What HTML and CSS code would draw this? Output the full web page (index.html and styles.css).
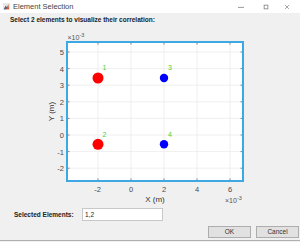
FILE: index.html
```html
<!DOCTYPE html>
<html>
<head>
<meta charset="utf-8">
<link rel="stylesheet" href="styles.css">
</head>
<body>
<div class="window">
  <div class="titlebar">
    <svg class="appicon" width="8" height="8" viewBox="0 0 8 8">
      <rect x="0" y="0" width="8" height="8" fill="#e8e8e8"/>
      <path d="M1 7 L3 3 L4.5 5 L6 1 L7 7 Z" fill="#d9531e"/>
      <path d="M3 3 L4.5 5 L3.5 7 L1 7 Z" fill="#2b6fb5"/>
    </svg>
    <span class="title">Element Selection</span>
    <span class="spacer"></span>
    <span class="ctrl">
      <svg width="8" height="8" viewBox="0 0 8 8"><line x1="0" y1="4.5" x2="8" y2="4.5" stroke="#777" stroke-width="1"/></svg>
    </span>
    <span class="ctrl">
      <svg width="8" height="8" viewBox="0 0 8 8"><rect x="1.5" y="1.5" width="5" height="5" fill="none" stroke="#777" stroke-width="1"/></svg>
    </span>
    <span class="ctrl">
      <svg width="8" height="8" viewBox="0 0 8 8"><path d="M1.5 1.5 L6.5 6.5 M6.5 1.5 L1.5 6.5" stroke="#777" stroke-width="0.9"/></svg>
    </span>
  </div>
  <div class="content">
    <div class="prompt">Select 2 elements to visualize their correlation:</div>
    <svg class="plot" width="300" height="180" viewBox="0 26 300 180">
      <rect x="67" y="42" width="176" height="139" fill="#ffffff"/>
      <g stroke="#ebebeb" stroke-width="0.8">
        <line x1="98" y1="42" x2="98" y2="181"/>
        <line x1="131" y1="42" x2="131" y2="181"/>
        <line x1="164" y1="42" x2="164" y2="181"/>
        <line x1="197" y1="42" x2="197" y2="181"/>
        <line x1="230" y1="42" x2="230" y2="181"/>
        <line x1="67" y1="52" x2="243" y2="52"/>
        <line x1="67" y1="68.6" x2="243" y2="68.6"/>
        <line x1="67" y1="85.2" x2="243" y2="85.2"/>
        <line x1="67" y1="101.8" x2="243" y2="101.8"/>
        <line x1="67" y1="118.4" x2="243" y2="118.4"/>
        <line x1="67" y1="135" x2="243" y2="135"/>
        <line x1="67" y1="151.6" x2="243" y2="151.6"/>
        <line x1="67" y1="168.2" x2="243" y2="168.2"/>
      </g>
      <g stroke="#555" stroke-width="0.7">
        <line x1="67" y1="52" x2="69.5" y2="52"/>
        <line x1="67" y1="68.6" x2="69.5" y2="68.6"/>
        <line x1="67" y1="85.2" x2="69.5" y2="85.2"/>
        <line x1="67" y1="101.8" x2="69.5" y2="101.8"/>
        <line x1="67" y1="118.4" x2="69.5" y2="118.4"/>
        <line x1="67" y1="135" x2="69.5" y2="135"/>
        <line x1="67" y1="151.6" x2="69.5" y2="151.6"/>
        <line x1="67" y1="168.2" x2="69.5" y2="168.2"/>
        <line x1="243" y1="52" x2="240.5" y2="52"/>
        <line x1="243" y1="68.6" x2="240.5" y2="68.6"/>
        <line x1="243" y1="85.2" x2="240.5" y2="85.2"/>
        <line x1="243" y1="101.8" x2="240.5" y2="101.8"/>
        <line x1="243" y1="118.4" x2="240.5" y2="118.4"/>
        <line x1="243" y1="135" x2="240.5" y2="135"/>
        <line x1="243" y1="151.6" x2="240.5" y2="151.6"/>
        <line x1="243" y1="168.2" x2="240.5" y2="168.2"/>
        <line x1="98" y1="181" x2="98" y2="178.5"/>
        <line x1="131" y1="181" x2="131" y2="178.5"/>
        <line x1="164" y1="181" x2="164" y2="178.5"/>
        <line x1="197" y1="181" x2="197" y2="178.5"/>
        <line x1="230" y1="181" x2="230" y2="178.5"/>
        <line x1="98" y1="42" x2="98" y2="44.5"/>
        <line x1="131" y1="42" x2="131" y2="44.5"/>
        <line x1="164" y1="42" x2="164" y2="44.5"/>
        <line x1="197" y1="42" x2="197" y2="44.5"/>
        <line x1="230" y1="42" x2="230" y2="44.5"/>
      </g>
      <rect x="67" y="42" width="176" height="139" fill="none" stroke="#3ea8e4" stroke-width="2"/>
      <g class="tick" text-anchor="end">
        <text x="64" y="55">5</text>
        <text x="64" y="71.6">4</text>
        <text x="64" y="88.2">3</text>
        <text x="64" y="104.8">2</text>
        <text x="64" y="121.4">1</text>
        <text x="64" y="138">0</text>
        <text x="64" y="154.6">-1</text>
        <text x="64" y="171.2">-2</text>
      </g>
      <g class="tick" text-anchor="middle">
        <text x="97.5" y="192">-2</text>
        <text x="131" y="192">0</text>
        <text x="164" y="192">2</text>
        <text x="197" y="192">4</text>
        <text x="230" y="192">6</text>
      </g>
      <text class="exp" x="67.5" y="39.5">×10<tspan class="sup" dy="-3">-3</tspan></text>
      <text class="exp" x="225" y="203">×10<tspan class="sup" dy="-3">-3</tspan></text>
      <text class="axlabel" x="155" y="202" text-anchor="middle">X (m)</text>
      <text class="axlabel" x="0" y="0" text-anchor="middle" transform="translate(53.5 111.5) rotate(-90)">Y (m)</text>
      <circle cx="98" cy="78" r="5.5" fill="#ff0000"/>
      <circle cx="98" cy="144.3" r="5.5" fill="#ff0000"/>
      <circle cx="164" cy="78" r="4.2" fill="#0000ff"/>
      <circle cx="164" cy="144.3" r="4.2" fill="#0000ff"/>
      <g class="lbl">
        <text x="102.5" y="70">1</text>
        <text x="102.5" y="136.5">2</text>
        <text x="168" y="70">3</text>
        <text x="168" y="136.5">4</text>
      </g>
    </svg>
    <div class="selected">
      <span class="sellabel">Selected Elements:</span>
      <div class="input">1,2</div>
    </div>
    <div class="buttons">
      <div class="btn">OK</div>
      <div class="btn">Cancel</div>
    </div>
  </div>
  <div class="bottomline"></div>
</div>
</body>
</html>
```
FILE: styles.css
```css
html, body {
  margin: 0;
  padding: 0;
  width: 300px;
  height: 242px;
  overflow: hidden;
  font-family: "Liberation Sans", Arial, sans-serif;
  background: #f0f0f0;
}
.window {
  width: 300px;
  height: 242px;
  display: flex;
  flex-direction: column;
  background: #f0f0f0;
}
.titlebar {
  height: 13px;
  background: #ffffff;
  display: flex;
  align-items: center;
  padding-left: 3px;
}
.appicon {
  display: block;
  width: 7px;
  height: 7px;
}
.title {
  font-size: 7.5px;
  color: #444;
  margin-left: 3px;
  line-height: 13px;
}
.spacer {
  flex: 1;
}
.ctrl {
  width: 25px;
  height: 13px;
  display: flex;
  align-items: center;
  justify-content: center;
}
.ctrl svg {
  display: block;
  width: 6px;
  height: 6px;
}
.ctrl:last-child {
  width: 22px;
  justify-content: flex-start;
  padding-left: 6px;
  box-sizing: border-box;
}
.content {
  display: flex;
  flex-direction: column;
  flex: 1;
}
.prompt {
  font-size: 6.5px;
  font-weight: bold;
  color: #222;
  line-height: 8px;
  margin-top: 3px;
  padding-left: 10px;
  height: 8px;
  white-space: nowrap;
}
.plot {
  display: block;
  margin-top: 2px;
}
.tick {
  font-size: 7.5px;
  fill: #4a4a4a;
  font-family: "Liberation Sans", Arial, sans-serif;
}
.exp {
  font-size: 7px;
  fill: #555;
  font-family: "Liberation Sans", Arial, sans-serif;
}
.sup {
  font-size: 5.5px;
}
.axlabel {
  font-size: 8px;
  fill: #333;
  font-family: "Liberation Sans", Arial, sans-serif;
}
.lbl {
  font-size: 7px;
  fill: #3fd23f;
  font-family: "Liberation Sans", Arial, sans-serif;
}
.selected {
  display: flex;
  align-items: center;
  margin-top: 2px;
  height: 13px;
}
.sellabel {
  font-size: 6.5px;
  font-weight: bold;
  color: #222;
  width: 68px;
  padding-left: 14px;
  white-space: nowrap;
}
.input {
  width: 81px;
  height: 13px;
  box-sizing: border-box;
  background: #ffffff;
  border: 1px solid #c8c8c8;
  font-size: 6.5px;
  line-height: 11px;
  padding-left: 2px;
  color: #222;
}
.buttons {
  display: flex;
  justify-content: flex-end;
  gap: 5px;
  margin-top: 5px;
  padding-right: 1px;
}
.btn {
  width: 43px;
  height: 12px;
  box-sizing: border-box;
  background: #e1e1e1;
  border: 1px solid #adadad;
  font-size: 6.5px;
  line-height: 10px;
  text-align: center;
  color: #333;
}
.bottomline {
  height: 1px;
  background: #b0b0b0;
  margin-top: auto;
  margin-bottom: 1px;
}
```
